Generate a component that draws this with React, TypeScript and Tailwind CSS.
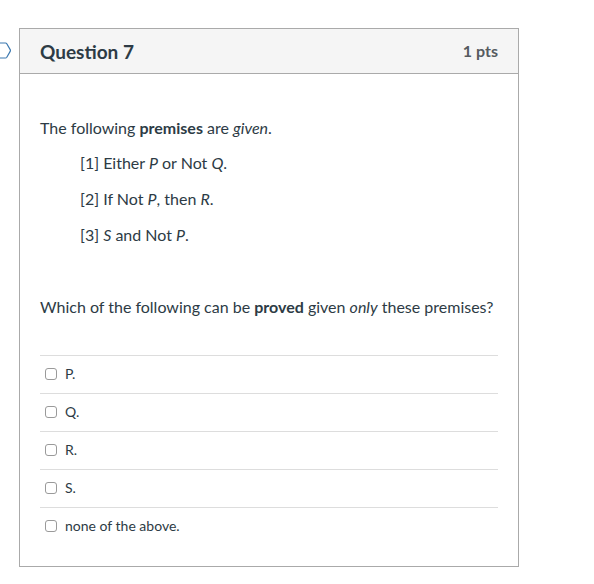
import React from "react";

const answers = ["P.", "Q.", "R.", "S.", "none of the above."];

export default function App() {
  return (
    <div
      className="relative w-[594px] h-[584px] bg-white text-[#2d3b45]"
      style={{ fontFamily: "Lato, 'Noto Sans', sans-serif" }}
    >
      <svg
        className="absolute left-0 top-[42px]"
        width="12"
        height="17"
        viewBox="0 0 12 17"
        fill="none"
      >
        <path
          d="M-4 1 H5.5 Q6.3 1 6.8 1.8 L10.2 7.6 Q10.6 8.5 10.2 9.4 L6.8 15.2 Q6.3 16 5.5 16 H-4"
          stroke="#3d79b0"
          strokeWidth="1.2"
          strokeLinejoin="round"
        />
      </svg>
      <div className="absolute left-[19px] top-[28px] w-[500px] border border-[#aaaaaa]">
        <div className="flex h-[45px] items-center justify-between border-b border-[#aaaaaa] bg-[#f5f5f5] px-[20px]">
          <span className="text-[19px] font-bold leading-none">Question 7</span>
          <span className="text-[16px] font-bold leading-none text-[#555b60]">1 pts</span>
        </div>
        <div className="px-[20px] pt-[42px] pb-[21px] text-[16px] leading-6">
          <p>
            The following <strong>premises</strong> are <em>given</em>.
          </p>
          <p className="mt-[11px] ml-[40px]">
            [1] Either <em>P</em> or Not <em>Q</em>.
          </p>
          <p className="mt-[12px] ml-[40px]">
            [2] If Not <em>P</em>, then <em>R</em>.
          </p>
          <p className="mt-[12px] ml-[40px]">
            [3] <em>S</em> and Not <em>P</em>.
          </p>
          <p className="mt-[48px]">
            Which of the following can be <strong>proved</strong> given <em>only</em> these premises?
          </p>
          <div className="mt-[36px]">
            {answers.map((a) => (
              <div
                key={a}
                className="flex h-[38px] items-center border-t border-[#dddddd] pb-[2px] pl-[5px] text-[14px]"
              >
                <span className="mr-[8px] h-[12px] w-[12px] rounded-[3px] border border-[#9a9a9a] bg-white" />
                <span>{a}</span>
              </div>
            ))}
          </div>
        </div>
      </div>
    </div>
  );
}
